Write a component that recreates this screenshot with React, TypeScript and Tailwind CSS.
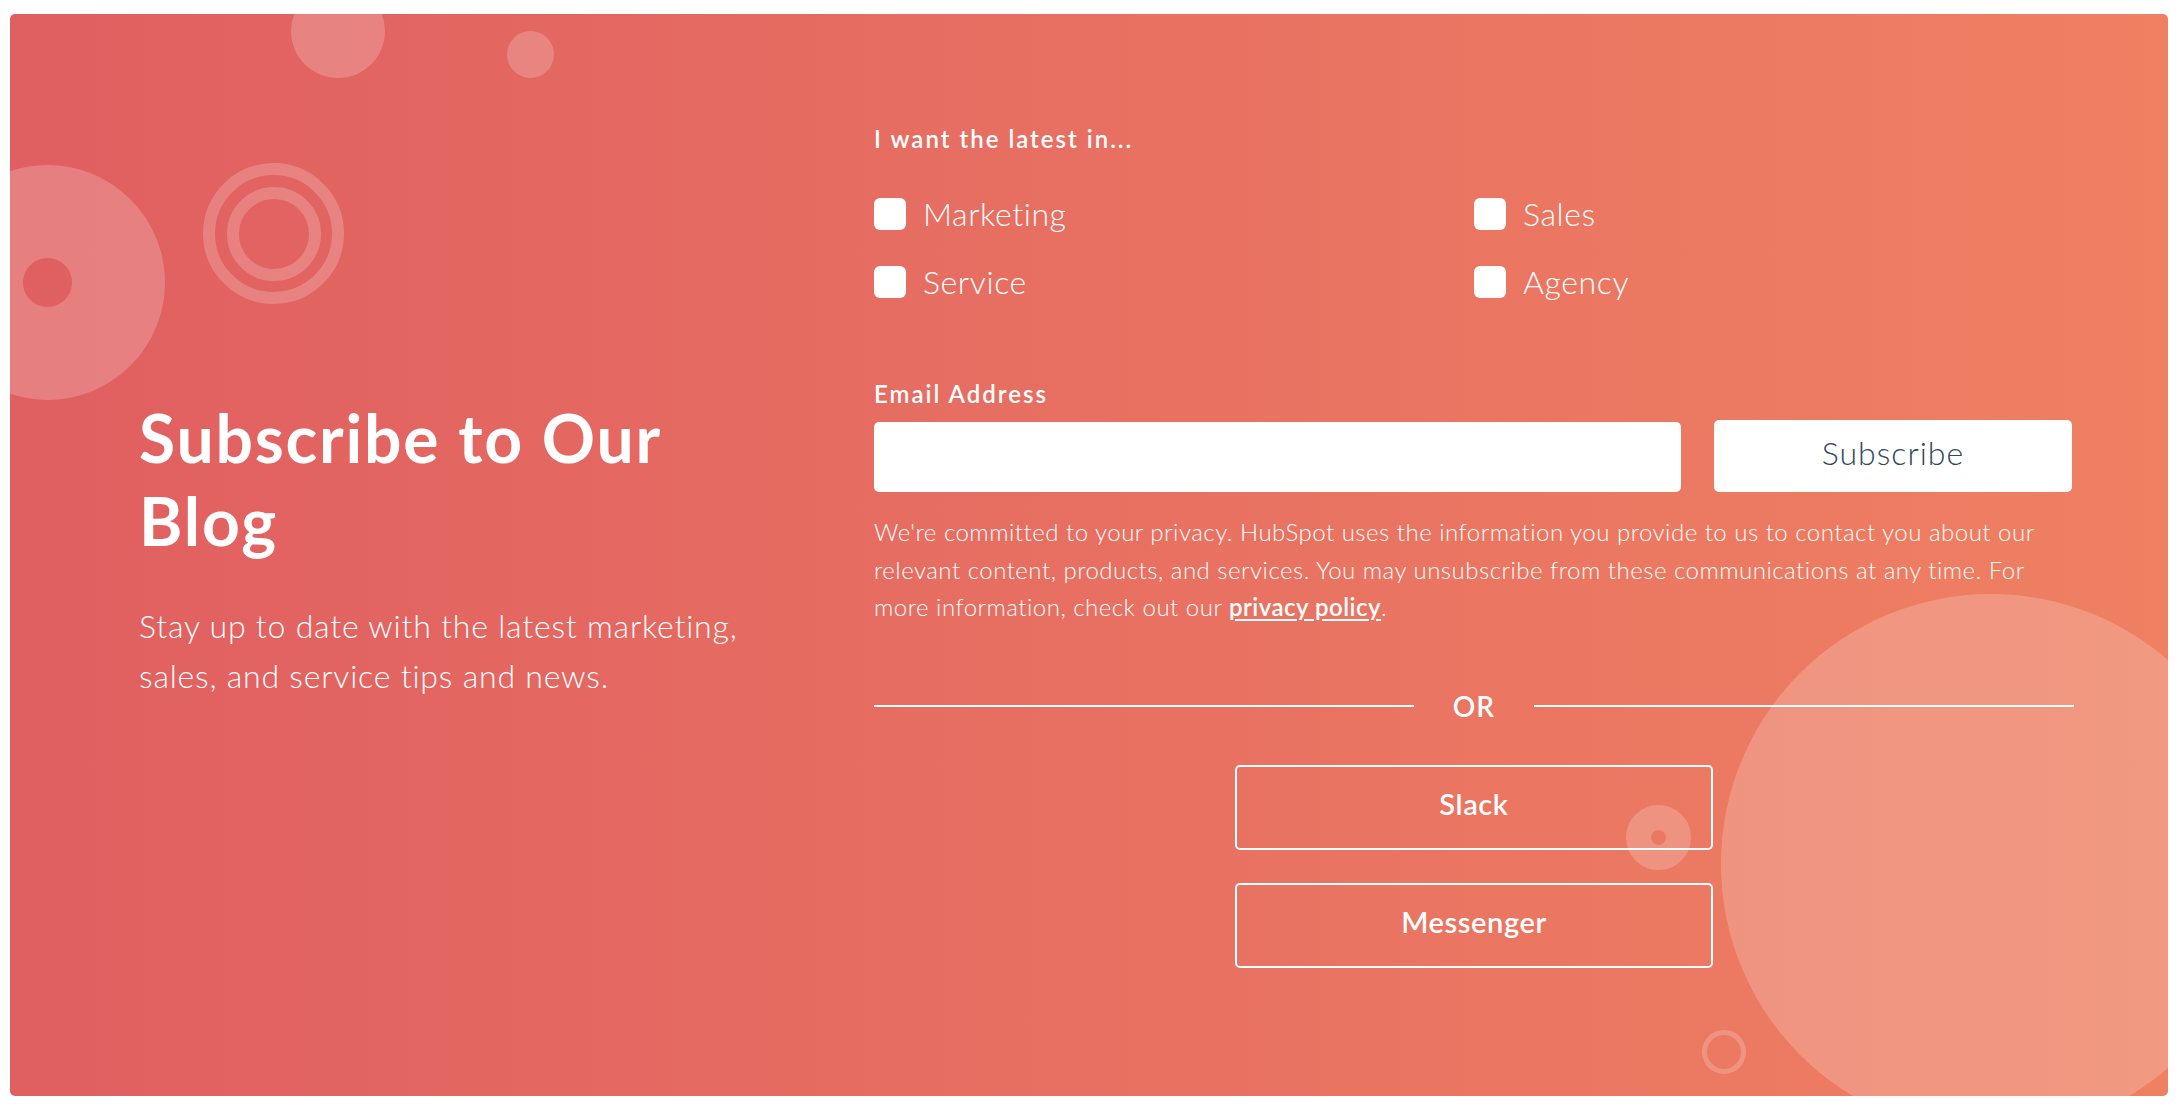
const topics = [
  ["Marketing", "Sales"],
  ["Service", "Agency"],
];

const Checkbox = ({ label }: { label: string }) => (
  <label className="flex items-center gap-[17px] w-[600px]">
    <span className="w-[32px] h-[32px] rounded-[6px] bg-white shrink-0" />
    <span className="text-[32px] leading-[32px] font-light tracking-[0.6px]">{label}</span>
  </label>
);

const App = () => {
  return (
    <div
      className="bg-white min-h-screen pt-[14px] pl-[10px] pr-[12px] pb-[12px] text-white"
      style={{ fontFamily: "Lato, 'Open Sans', sans-serif" }}
    >
      <div className="relative overflow-hidden rounded-[5px] h-[1082px] bg-gradient-to-r from-[#e05f61] to-[#ef8062] flex">
        {/* Decorations */}
        <div className="absolute left-[281px] top-[-30px] w-[94px] h-[94px] rounded-full bg-white/20" />
        <div className="absolute left-[497px] top-[17px] w-[47px] h-[47px] rounded-full bg-white/20" />
        <div className="absolute left-[-80px] top-[151px] w-[235px] h-[235px] rounded-full border-[93px] border-white/20" />
        <div className="absolute left-[193px] top-[149px] w-[141px] h-[141px] rounded-full border-[12px] border-white/20" />
        <div className="absolute left-[217px] top-[173px] w-[94px] h-[94px] rounded-full border-[12px] border-white/20" />
        <div className="absolute left-[1711px] top-[580px] w-[540px] h-[540px] rounded-full bg-white/20" />
        <div className="absolute left-[1616px] top-[791px] w-[65px] h-[65px] rounded-full border-[25px] border-white/20" />
        <div className="absolute left-[1692px] top-[1016px] w-[44px] h-[44px] rounded-full border-[5px] border-white/20" />

        {/* Left column */}
        <div className="relative z-10 w-[735px] pl-[129px] pt-[382px] shrink-0 box-content">
          <h1 className="text-[66px] leading-[83px] font-bold tracking-[1.8px]">
            Subscribe to Our
            <br />
            Blog
          </h1>
          <p className="mt-[39px] text-[32px] leading-[50px] font-light tracking-[0.8px] max-w-[640px]">
            Stay up to date with the latest marketing,
            <br />
            sales, and service tips and news.
          </p>
        </div>

        {/* Right column */}
        <div className="relative z-10 w-[1200px] pt-[110px]">
          <div className="text-[24px] leading-[30px] font-semibold tracking-[2px]">I want the latest in...</div>
          <div className="mt-[44px] flex flex-col gap-[36px]">
            {topics.map((row) => (
              <div key={row[0]} className="flex">
                {row.map((t) => (
                  <Checkbox key={t} label={t} />
                ))}
              </div>
            ))}
          </div>

          <div className="mt-[81px] text-[24px] leading-[30px] font-semibold tracking-[2px]">Email Address</div>
          <div className="mt-[11px] flex items-end gap-[33px]">
            <input className="w-[807px] h-[70px] rounded-[5px] bg-white outline-none px-4 text-[#33475b] text-[24px]" />
            <button className="w-[358px] h-[72px] rounded-[5px] bg-white text-[#33475b] text-[32px] font-light tracking-[1px] flex items-center justify-center pb-[7px]">
              Subscribe
            </button>
          </div>

          <p className="mt-[21px] text-[24px] leading-[37.5px] font-light tracking-[0.5px]">
            We're committed to your privacy. HubSpot uses the information you provide to us to contact you about our
            <br />
            relevant content, products, and services. You may unsubscribe from these communications at any time. For
            <br />
            more information, check out our{" "}
            <a href="#" className="font-semibold underline underline-offset-[3px]">
              privacy policy
            </a>
            .
          </p>

          <div className="mt-[65px] flex items-center">
            <div className="flex-1 h-[2px] bg-white" />
            <div className="w-[120px] text-center text-[28px] leading-[30px] font-semibold tracking-[1px]">OR</div>
            <div className="flex-1 h-[2px] bg-white" />
          </div>

          <div className="mt-[44px] flex flex-col items-center gap-[33px]">
            {["Slack", "Messenger"].map((b) => (
              <button
                key={b}
                className="w-[478px] h-[85px] rounded-[5px] border-2 border-white text-[29px] font-semibold tracking-[0.6px] flex items-center justify-center pb-[7px]"
              >
                {b}
              </button>
            ))}
          </div>
        </div>
      </div>
    </div>
  );
};

export default App;
